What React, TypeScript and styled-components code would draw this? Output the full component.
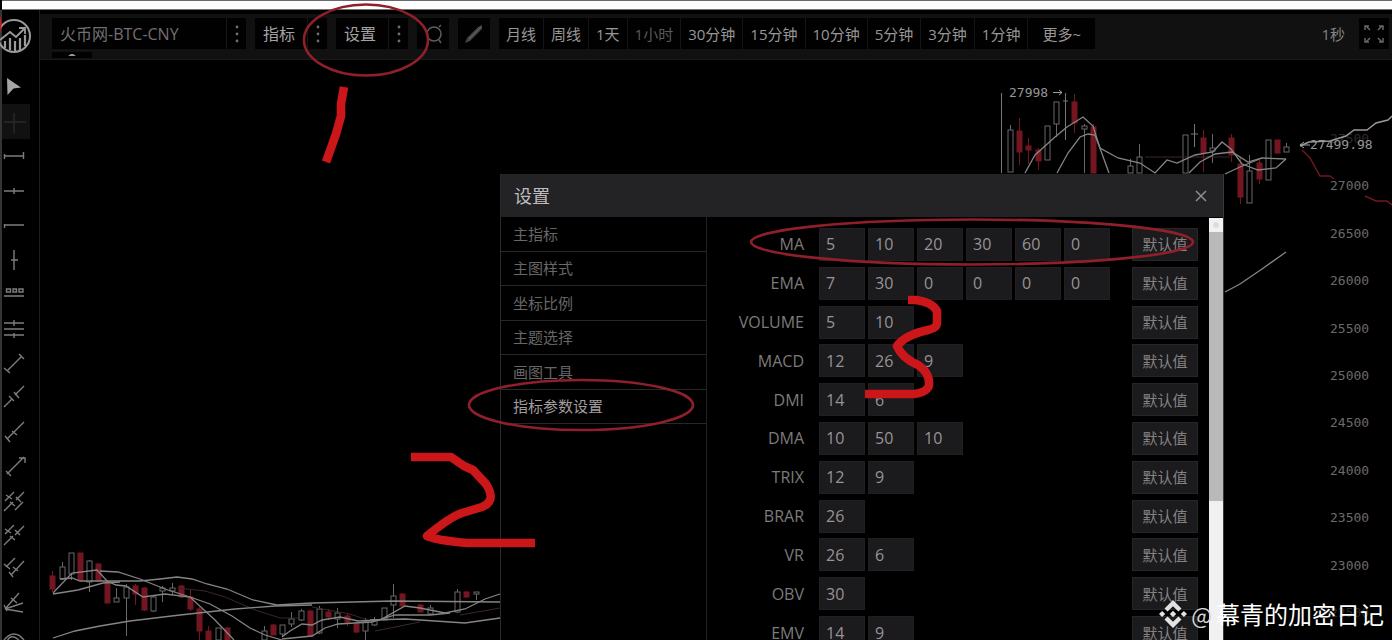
import React from "react";
import styled, { createGlobalStyle } from "styled-components";

const GlobalStyle = createGlobalStyle`
  * { box-sizing: border-box; }
  body { margin: 0; background: #000; }
  button, input { font: inherit; color: inherit; margin: 0; padding: 0; border: 0; border-radius: 0; background: none; }
  ul { list-style: none; margin: 0; padding: 0; }
`;

const Page = styled.div`
  position: relative;
  display: flex;
  flex-direction: column;
  height: 100vh;
  overflow: hidden;
  background: #000;
  color: #8a8788;
  font-family: "Open Sans", "Noto Sans CJK SC", sans-serif;
  font-size: 15px;
  line-height: 20px;
`;

const TopStrip = styled.div`
  flex: none;
  height: 10px;
  margin-left: 2px;
  background: #fdfdfd;
  border-top: 1px solid #6a6a6a;
  border-bottom: 1px solid #777;
`;

const Workspace = styled.div`
  flex: 1;
  min-height: 0;
  display: flex;
`;

const ToolRail = styled.nav`
  flex: none;
  width: 40px;
  display: flex;
  flex-direction: column;
  padding-top: 8px;
  margin-bottom: -16px;
  border-left: 2px solid #343434;
  border-right: 1px solid #1f1e1f;
`;

const LogoBox = styled.div`
  flex: none;
  height: 52px;
  margin-left: -2px;
`;

const ToolButton = styled.button<{ $active?: boolean }>`
  flex: 1;
  min-height: 0;
  width: 28px;
  display: flex;
  align-items: center;
  background: ${(p) => (p.$active ? "#121112" : "transparent")};
`;

const Main = styled.main`
  flex: 1;
  min-width: 0;
  display: flex;
  flex-direction: column;
`;

const Toolbar = styled.header`
  flex: none;
  height: 46px;
  margin-top: 4px;
  padding: 4px 3px 0 12px;
  display: flex;
  align-items: flex-start;
  gap: 9px;
  background: #111;
  border-bottom: 1px solid #191919;
`;

const SymbolBlock = styled.div`
  display: flex;
  flex-direction: column;
  gap: 3px;
`;

const Group = styled.div<{ $width?: number }>`
  display: flex;
  height: 31px;
  width: ${(p) => (p.$width ? `${p.$width}px` : "auto")};
  background: #010101;
`;

const GroupMain = styled.button<{ $bright?: boolean }>`
  flex: 1;
  padding-left: 8px;
  text-align: left;
  font-size: 16px;
  color: ${(p) => (p.$bright ? "#a5a2a3" : "#727071")};
`;

const MoreButton = styled.button`
  width: 20px;
  display: flex;
  align-items: center;
  justify-content: center;
  border-left: 1px solid #161616;
`;

const CollapseTab = styled.button`
  width: 40px;
  height: 6px;
  display: flex;
  align-items: center;
  justify-content: center;
  background: #010101;
`;

const IconButton = styled.button<{ $size?: number }>`
  width: ${(p) => p.$size ?? 32}px;
  height: 31px;
  display: flex;
  align-items: center;
  justify-content: center;
  background: #010101;
`;

const PeriodButton = styled.button<{ $dim?: boolean }>`
  padding: 0 7px;
  border-right: 1px solid #151515;
  white-space: nowrap;
  color: ${(p) => (p.$dim ? "#5b595a" : "#9a9798")};
  &:last-child { padding: 0 14px; border-right: 0; }
`;

const Right = styled.div`
  margin-left: auto;
  display: flex;
  align-items: center;
  gap: 14px;
  color: #858283;
`;

const Stage = styled.section`
  flex: 1;
  min-height: 0;
  position: relative;
  display: flex;
  justify-content: flex-end;
`;

const PriceAxis = styled.ul`
  width: 62px;
  display: flex;
  flex-direction: column;
  padding-top: 55px;
  padding-bottom: 3px;
  font-family: "DejaVu Sans Mono", monospace;
  font-size: 13px;
  color: #6c6a6b;
`;

const Price = styled.li<{ $faint?: boolean }>`
  flex: 1;
  display: flex;
  align-items: center;
  opacity: ${(p) => (p.$faint ? 0.4 : 1)};
`;

const Layer = styled.svg<{ $level: number }>`
  position: absolute;
  inset: 0;
  width: 100%;
  height: 100%;
  z-index: ${(p) => p.$level};
  pointer-events: none;
`;

const Dialog = styled.section`
  position: absolute;
  z-index: 2;
  top: 114px;
  bottom: -12px;
  left: 460px;
  width: 724px;
  display: flex;
  flex-direction: column;
  background: #000;
  border-left: 1px solid #2c2b2c;
  border-right: 1px solid #3a393a;
`;

const DialogHeader = styled.header`
  flex: none;
  height: 43px;
  padding: 0 16px 0 13px;
  display: flex;
  align-items: center;
  justify-content: space-between;
  background: #232225;
`;

const DialogTitle = styled.h2`
  margin: 0;
  font-size: 18px;
  line-height: 24px;
  font-weight: 400;
  color: #bfbcbd;
`;

const CloseButton = styled.button`
  width: 12px;
  height: 20px;
`;

const DialogBody = styled.div`
  flex: 1;
  min-height: 0;
  display: flex;
`;

const Sections = styled.nav`
  width: 206px;
  border-right: 1px solid #232123;
`;

const SectionList = styled.ul`
  height: 207px;
  display: flex;
  flex-direction: column;
`;

const SectionItem = styled.li`
  flex: 1;
  display: flex;
  border-bottom: 1px solid #292829;
`;

const SectionButton = styled.button<{ $active?: boolean }>`
  flex: 1;
  padding-left: 12px;
  text-align: left;
  color: ${(p) => (p.$active ? "#a09d9e" : "#686667")};
`;

const Params = styled.form`
  flex: 1;
  display: flex;
  flex-direction: column;
  padding: 8px 11px 0 0;
  font-size: 16px;
`;

const ParamRow = styled.div`
  flex: 1;
  min-height: 0;
  display: flex;
  align-items: center;
`;

const ParamLabel = styled.label`
  width: 97px;
  margin-right: 15px;
  text-align: right;
  color: #7d7a7b;
`;

const Values = styled.div`
  flex: 1;
  display: flex;
  gap: 3px;
`;

const ValueInput = styled.input`
  width: 46px;
  height: 33px;
  padding-left: 6px;
  background: #1b1a1d;
  border: 1px solid #211f22;
  color: #979495;
`;

const DefaultButton = styled.button`
  width: 66px;
  height: 33px;
  background: #1b1a1d;
  border: 1px solid #272528;
  font-size: 15px;
  color: #858283;
`;

const ScrollTrack = styled.div`
  width: 14px;
  margin-top: 1px;
  display: flex;
  flex-direction: column;
  background: #f1f1f1;
`;

const ScrollArrow = styled.div`
  height: 14px;
  display: flex;
  align-items: center;
  justify-content: center;
`;

const ScrollThumb = styled.div`
  height: 62%;
  background: #b9b9b9;
`;

const Watermark = styled.footer`
  position: absolute;
  z-index: 4;
  right: 8px;
  bottom: 10px;
  display: flex;
  align-items: center;
  gap: 4px;
  font-family: "Noto Sans CJK SC", sans-serif;
  font-size: 24px;
  line-height: 32px;
  color: #fff;
`;

const At = styled.span`
  font-size: 22px;
  color: #d6d6d6;
`;

const Dots = () => (
  <svg width="4" height="20" viewBox="0 0 4 20" fill="#6f6d6e">
    <circle cx="2" cy="3" r="1.4" />
    <circle cx="2" cy="10" r="1.4" />
    <circle cx="2" cy="17" r="1.4" />
  </svg>
);

const tools: { name: string; d: string; fill?: boolean }[] = [
  { name: "光标", d: "M5 8L19 17.500L11.500 18.500L5.500 25Z", fill: true },
  { name: "十字线", d: "M2 17H24M12 8V28" },
  { name: "水平线段", d: "M2 17H22M2.500 15V20M21.500 13V20" },
  { name: "水平直线", d: "M2 17H22M12 14V20" },
  { name: "水平射线", d: "M2 17H22M2.500 16V20" },
  { name: "垂直线", d: "M12 7V27M9 17H16" },
  { name: "价格线", d: "M2 19H22M4.500 12h4v3h-4zM11 12h3.500v3H11zM17 12h4v3h-4z" },
  { name: "平行价格线", d: "M2 11H22M2 17H22M2 23H22M12 8V14M12 21V26" },
  { name: "线段", d: "M5 25L20 10M2 22L8 27M17 8L22 13" },
  { name: "直线", d: "M2 27L10 19M13 15L22 6M7 16L12 21M12 12L17 18" },
  { name: "射线", d: "M5 24L22 7M3 21L8 27M10 16L15 20" },
  { name: "箭头", d: "M5 25L22 8M4 22L9 27M17 9H23V14" },
  { name: "平行线", d: "M3 17L12 8M2 27L11 18M14 16L22 8M13 26L21 18M4 11L10 15M8 18L13 22M14 13L19 18" },
  { name: "通道线", d: "M3 16L12 7M2 27L11 18M13 17L22 8M3 11L9 15M8 18L13 22M13 12L18 17" },
  { name: "平行线段", d: "M4 14L13 5M9 22L22 8M2 11L8 16M7 19L11 24M11 14L16 18" },
  { name: "扇形线", d: "M3 22L17 6M3 22L21 16M3 22L21 25M9 11L15 16M2 18L5 24" },
  { name: "弧线", d: "M2 18Q12 6 22 18M4 26Q5 13 12 15T20 28M8 25Q12 14 17 25" },
];

const periods = ["月线", "周线", "1天", "1小时", "30分钟", "15分钟", "10分钟", "5分钟", "3分钟", "1分钟"];

const prices = ["27500", "27000", "26500", "26000", "25500", "25000", "24500", "24000", "23500", "23000", "22500"];

const sections = ["主指标", "主图样式", "坐标比例", "主题选择", "画图工具", "指标参数设置"];

const params: [string, number[]][] = [
  ["MA", [5, 10, 20, 30, 60, 0]],
  ["EMA", [7, 30, 0, 0, 0, 0]],
  ["VOLUME", [5, 10]],
  ["MACD", [12, 26, 9]],
  ["DMI", [14, 6]],
  ["DMA", [10, 50, 10]],
  ["TRIX", [12, 9]],
  ["BRAR", [26]],
  ["VR", [26, 6]],
  ["OBV", [30]],
  ["EMV", [14, 9]],
];

// x, high, body top, body bottom, low, falling
type Candle = [number, number, number, number, number, boolean];
const candles: Candle[] = [
  [1010, 125, 130, 172, 172, false],
  [1019, 118, 131, 152, 165, true],
  [1028, 138, 146, 150, 164, true],
  [1038, 148, 150, 161, 170, true],
  [1047, 126, 126, 160, 160, false],
  [1056, 102, 102, 124, 137, false],
  [1074, 94, 102, 123, 133, true],
  [1084, 124, 126, 129, 173, false],
  [1093, 124, 127, 173, 173, true],
  [1130, 159, 166, 173, 173, false],
  [1139, 144, 157, 173, 173, false],
  [1185, 135, 135, 173, 173, false],
  [1203, 130, 138, 153, 172, true],
  [1212, 134, 148, 151, 163, false],
  [1231, 134, 138, 155, 162, true],
  [1240, 158, 164, 197, 204, true],
  [1249, 155, 171, 203, 203, false],
  [1259, 160, 163, 179, 184, true],
  [1268, 140, 140, 180, 180, false],
  [1277, 140, 140, 153, 153, true],
  [1286, 143, 147, 152, 152, false],
  [52, 571, 576, 589, 592, true],
  [62, 562, 567, 579, 580, false],
  [71, 553, 553, 574, 580, false],
  [80, 553, 553, 580, 581, true],
  [89, 560, 561, 582, 592, false],
  [98, 563, 564, 581, 582, true],
  [107, 581, 583, 603, 603, true],
  [116, 588, 598, 602, 602, false],
  [126, 584, 587, 598, 636, false],
  [135, 584, 586, 594, 605, true],
  [144, 587, 588, 610, 611, true],
  [153, 595, 597, 611, 612, false],
  [162, 586, 588, 591, 602, false],
  [172, 583, 588, 591, 595, false],
  [181, 585, 586, 597, 598, true],
  [190, 590, 597, 609, 611, true],
  [199, 607, 609, 631, 640, true],
  [208, 626, 631, 640, 640, true],
  [218, 628, 628, 640, 640, false],
  [227, 627, 628, 640, 640, true],
  [264, 626, 631, 640, 640, false],
  [273, 624, 625, 635, 635, true],
  [282, 625, 625, 634, 636, false],
  [291, 612, 619, 624, 627, false],
  [301, 609, 611, 620, 621, false],
  [310, 610, 611, 636, 637, true],
  [319, 606, 609, 633, 634, false],
  [328, 609, 612, 617, 620, true],
  [337, 608, 613, 619, 628, false],
  [347, 614, 616, 622, 626, true],
  [356, 622, 624, 632, 633, true],
  [365, 618, 622, 631, 640, false],
  [374, 617, 620, 625, 626, false],
  [384, 608, 608, 620, 620, false],
  [393, 584, 596, 605, 618, false],
  [402, 593, 594, 606, 607, true],
  [420, 604, 605, 612, 612, true],
  [430, 605, 608, 614, 615, false],
  [457, 589, 592, 612, 613, false],
  [466, 591, 592, 597, 598, true],
  [476, 592, 592, 594, 600, false],
];

const lines = [
  "1025,173 1035,155 1055,137 1067,127 1083,117 1093,126 1100,148 1118,158 1140,163 1155,173 1167,160 1177,163 1195,155 1213,152 1222,142 1231,149 1242,164 1258,170 1276,168 1286,159",
  "1057,173 1068,153 1080,137 1088,134 1095,135 1101,151 1109,173",
  "1189,173 1200,162 1215,154 1232,152 1248,162 1262,158 1286,159",
  "1225,174 1240,167 1262,158",
  "1225,292 1240,284 1262,269 1286,252",
  "53,593 72,573 97,570 107,581 116,585 126,586 143,597 165,594 190,597 215,620 234,640",
  "53,594 78,590 103,583 120,582",
  "60,579 72,578 80,581 140,581 160,579 177,577 192,579 207,584 227,589 253,600 277,605 312,603 393,601 500,602",
  "53,638 75,631 100,626 130,621 180,615 235,609 275,606 312,605",
  "190,597 210,604 232,616 250,628 265,635 282,640",
  "282,637 290,631 302,624 312,625 322,620 340,617 358,621 380,620 405,606 420,608 445,613 465,609 485,599 500,594",
  "282,639 312,636 325,628 338,624 372,622 395,615 430,615 450,613",
  "370,620 405,619 465,623 500,618",
  "100,571 118,572 140,579 165,589 190,597",
];

const faintLines = [
  "177,588 205,591 225,597 255,610 280,618 300,618",
  "312,607 350,614 370,621",
  "375,631 400,626 420,622",
  "460,615 500,608",
  "1145,157 1175,157 1230,157",
];

function ChartLayer() {
  return (
    <Layer $level={1} aria-hidden="true" fill="none">
      <path d="M1001.500 93V173M1065.500 93V140M1063 101H1068M1194.500 124V147M1191 134H1198" stroke="#777" />
      {candles.map(([x, high, top, bottom, low, falling]) => (
        <g key={`${x}-${high}`} stroke={falling ? "#741621" : "#686868"}>
          <path d={`M${x + 0.5} ${high}V${top}M${x + 0.5} ${bottom}V${low}`} />
          <rect x={x - 2} y={top} width="5" height={bottom - top} fill={falling ? "#741621" : "#000"} />
        </g>
      ))}
      {faintLines.map((points) => (
        <polyline key={points} points={points} stroke="#3a2729" />
      ))}
      {lines.map((points) => (
        <polyline key={points} points={points} stroke="#858585" strokeWidth="1.3" />
      ))}
      <polyline points="1300,146 1309,142 1330,141 1346,136 1354,130 1367,130 1376,123 1388,120 1392,116" stroke="#999" strokeWidth="1.4" />
      <path d="M1302 150L1310 158L1320 176H1330L1334 179M1365 196L1376 201H1387L1392 205" stroke="#741621" strokeWidth="1.4" />
      <path d="M1053 92.500H1062M1059 90L1062 92.500L1059 95M1310 145H1300M1304 142L1300 145L1304 148" stroke="#a0a0a0" />
      <g fontFamily="DejaVu Sans Mono, monospace" fill="#989697" fontSize="13">
        <text x="1009" y="97">27998</text>
        <text x="1310" y="149">27499.98</text>
      </g>
    </Layer>
  );
}

function Annotations() {
  return (
    <Layer $level={3} aria-hidden="true" fill="none" strokeLinejoin="round">
      <g stroke="#8f202b" strokeWidth="2.600">
        <ellipse cx="366" cy="40" rx="62" ry="35.500" />
        <ellipse cx="581" cy="405" rx="112" ry="25" />
        <ellipse cx="972" cy="242" rx="221" ry="22.500" />
      </g>
      <g stroke="#cb161a" strokeWidth="8.600">
        <path d="M344 87L341 104V116L336 134L326 162" />
        <path d="M411 457H451L464 466L473 470L486 484Q497 501 482 507L462 513Q450 517 427 536Q440 541 468 543H535" />
        <path d="M908 300H916Q932 302 937 311V323Q937 328 928 330Q905 335 897 346Q902 358 918 365Q930 373 929 385Q928 392 914 394H865" />
      </g>
      <path d="M0 15Q3 24 0 34Z" fill="#cb161a" />
    </Layer>
  );
}

export default function App() {
  return (
    <Page>
      <GlobalStyle />
      <TopStrip />
      <Workspace>
        <ToolRail aria-label="画图工具">
          <LogoBox>
            <svg width="34" height="36" viewBox="0 0 34 36" fill="none" stroke="#9a9a9a" strokeWidth="1.800">
              <circle cx="14" cy="18" r="16" strokeWidth="2" />
              <path d="M0 22L10 14L16 19L25 10M19 10H25V16" />
              <path d="M5 23V30M10 20V32M15 23V33M20 20V32M25 17V28" strokeWidth="2.200" />
            </svg>
          </LogoBox>
          {tools.map((t, i) => (
            <ToolButton key={t.name} $active={i === 1} aria-label={t.name}>
              <svg width="26" height="34" viewBox="0 0 26 34" fill={t.fill ? "#a5a5a5" : "none"} stroke={t.fill ? "none" : i === 1 ? "#2b292b" : "#7d7d7d"} strokeWidth="1.400">
                <path d={t.d} />
              </svg>
            </ToolButton>
          ))}
        </ToolRail>
        <Main>
          <Toolbar>
            <SymbolBlock>
              <Group $width={194}>
                <GroupMain>火币网-BTC-CNY</GroupMain>
                <MoreButton aria-label="更多交易对"><Dots /></MoreButton>
              </Group>
              <CollapseTab aria-label="收起">
                <svg width="8" height="4" viewBox="0 0 8 4"><path d="M0 3L3 1H5L8 3Z" fill="#999" /></svg>
              </CollapseTab>
            </SymbolBlock>
            <Group $width={72}>
              <GroupMain $bright>指标</GroupMain>
              <MoreButton aria-label="指标选项"><Dots /></MoreButton>
            </Group>
            <Group $width={72}>
              <GroupMain $bright>设置</GroupMain>
              <MoreButton aria-label="设置选项"><Dots /></MoreButton>
            </Group>
            <IconButton aria-label="搜索">
              <svg width="20" height="22" viewBox="0 0 20 22" fill="none" stroke="#5f5d5e" strokeWidth="1.500">
                <circle cx="11" cy="11" r="7" />
                <path d="M16 17L18 20M16 4L18 2" />
              </svg>
            </IconButton>
            <IconButton aria-label="画笔">
              <svg width="20" height="20" viewBox="0 0 20 20">
                <path d="M1 19L3 14L14 3L18 1L18 5L6 17Z" fill="#444243" />
                <path d="M5 15L17 3" stroke="#6b696a" />
              </svg>
            </IconButton>
            <Group>
              {periods.map((p) => (
                <PeriodButton key={p} $dim={p === "1小时"}>{p}</PeriodButton>
              ))}
              <PeriodButton>更多~</PeriodButton>
            </Group>
            <Right>
              <span>1秒</span>
              <IconButton $size={30} aria-label="全屏">
                <svg width="20" height="20" viewBox="0 0 20 20" fill="none" stroke="#686667" strokeWidth="1.500">
                  <path d="M1 6V2H5M2 2L6 6M15 2H19V6M18 2L14 6M1 14V18H5M2 18L6 14M15 18H19V14M18 18L14 14" />
                </svg>
              </IconButton>
            </Right>
          </Toolbar>
          <Stage>
            <PriceAxis>
              {prices.map((p, i) => (
                <Price key={p} $faint={i === 0 || i === 10}>{p}</Price>
              ))}
            </PriceAxis>
            <Dialog role="dialog" aria-labelledby="settings-title">
              <DialogHeader>
                <DialogTitle id="settings-title">设置</DialogTitle>
                <CloseButton aria-label="关闭">
                  <svg width="12" height="12" viewBox="0 0 12 12" stroke="#8f8d8e" strokeWidth="1.500">
                    <path d="M1 1L11 11M11 1L1 11" />
                  </svg>
                </CloseButton>
              </DialogHeader>
              <DialogBody>
                <Sections aria-label="设置分类">
                  <SectionList>
                    {sections.map((s, i) => (
                      <SectionItem key={s}>
                        <SectionButton $active={i === 5}>{s}</SectionButton>
                      </SectionItem>
                    ))}
                  </SectionList>
                </Sections>
                <Params onSubmit={(e) => e.preventDefault()}>
                  {params.map(([name, values]) => (
                    <ParamRow key={name}>
                      <ParamLabel htmlFor={`${name}-0`}>{name}</ParamLabel>
                      <Values>
                        {values.map((v, i) => (
                          <ValueInput key={i} id={`${name}-${i}`} aria-label={`${name} ${i + 1}`} defaultValue={v} />
                        ))}
                      </Values>
                      <DefaultButton type="button">默认值</DefaultButton>
                    </ParamRow>
                  ))}
                </Params>
                <ScrollTrack>
                  <ScrollArrow>
                    <svg width="8" height="8" viewBox="0 0 8 8"><circle cx="4" cy="4" r="3" fill="#dedede" /></svg>
                  </ScrollArrow>
                  <ScrollThumb />
                </ScrollTrack>
              </DialogBody>
            </Dialog>
          </Stage>
        </Main>
      </Workspace>
      <ChartLayer />
      <Annotations />
      <Watermark>
        <svg width="28" height="28" viewBox="0 0 28 28" fill="#e2e2e2">
          <path d="M14 0L22.500 8.500L19.400 11.600L14 6.200L8.600 11.600L5.500 8.500ZM14 28L5.500 19.500L8.600 16.400L14 21.800L19.400 16.400L22.500 19.500ZM3.100 10.900L6.200 14L3.100 17.100L0 14ZM24.900 10.900L28 14L24.900 17.100L21.800 14ZM14 10.800L17.200 14L14 17.200L10.800 14Z" />
        </svg>
        <At>@</At>
        <span>幕青的加密日记</span>
      </Watermark>
    </Page>
  );
}
